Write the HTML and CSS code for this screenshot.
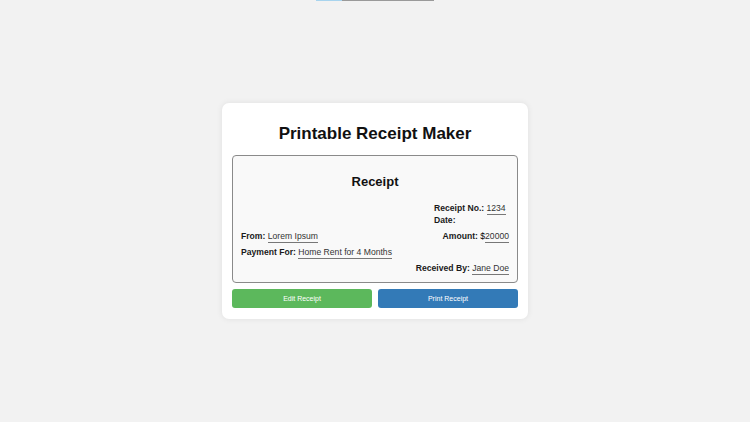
FILE: index.html
```html
<!DOCTYPE html>
<html lang="en">
<head>
<meta charset="utf-8">
<title>Printable Receipt Maker</title>
<link rel="stylesheet" href="styles.css">
</head>
<body>
<div class="topbar"><span class="topbar-fill"></span></div>
<main class="card">
  <h1 class="title">Printable Receipt Maker</h1>
  <section class="receipt">
    <h2 class="receipt-title">Receipt</h2>
    <div class="row right stack">
      <div><b>Receipt No.:</b> <span class="val">1234</span></div>
      <div><b>Date:</b> <span class="val empty"></span></div>
    </div>
    <div class="row split">
      <div><b>From:</b> <span class="val">Lorem Ipsum</span></div>
      <div><b>Amount:</b> $<span class="val">20000</span></div>
    </div>
    <div class="row">
      <div><b>Payment For:</b> <span class="val">Home Rent for 4 Months</span></div>
    </div>
    <div class="row right">
      <div><b>Received By:</b> <span class="val">Jane Doe</span></div>
    </div>
  </section>
  <div class="actions">
    <button class="btn btn-edit">Edit Receipt</button>
    <button class="btn btn-print">Print Receipt</button>
  </div>
</main>
</body>
</html>
```
FILE: styles.css
```css
* { box-sizing: border-box; }
html, body { height: 100%; }
body {
  margin: 0;
  background: #f2f2f2;
  font-family: "Liberation Sans", Arial, sans-serif;
  color: #000;
  display: flex;
  align-items: center;
  justify-content: center;
}
.topbar {
  position: fixed;
  top: 0;
  left: 316px;
  width: 118px;
  height: 1px;
  background: #9a9a9a;
}
.topbar-fill {
  display: block;
  width: 26px;
  height: 1px;
  background: #a8d4ee;
}
.card {
  width: 306px;
  background: #fff;
  border-radius: 7px;
  padding: 10px 10px 11px;
  box-shadow: 0 0 6px rgba(0, 0, 0, 0.08);
}
.title {
  margin: 11px 0;
  font-size: 17px;
  line-height: 20px;
  text-align: center;
  font-weight: bold;
  color: #111;
}
.receipt {
  border: 1px solid #8a8a8a;
  border-radius: 4px;
  background: #f9f9f9;
  padding: 8px 8px 8px;
  font-size: 8.6px;
  line-height: 12px;
}
.receipt-title {
  margin: 10px 0 12px;
  font-size: 13px;
  line-height: 16px;
  text-align: center;
  font-weight: bold;
  color: #111;
}
.row { margin-top: 4px; }
.row.stack { margin-top: 0; display: flex; flex-direction: column; align-items: flex-end; }
.row.stack > div { width: 75px; }
.row.right { display: flex; justify-content: flex-end; }
.row.split { display: flex; justify-content: space-between; }
.row b { color: #1a1a1a; }
.val {
  color: #333;
  border-bottom: 1px solid #777;
  padding-bottom: 1px;
}
.val.empty { border-bottom: 0; }
.actions {
  display: flex;
  gap: 6px;
  margin-top: 6px;
}
.btn {
  flex: 1;
  height: 19px;
  border: 0;
  border-radius: 3px;
  color: #fff;
  font-family: "Liberation Sans", Arial, sans-serif;
  font-size: 7px;
  padding: 0;
}
.btn-edit { background: #5cb85c; }
.btn-print { background: #337ab7; }
```
